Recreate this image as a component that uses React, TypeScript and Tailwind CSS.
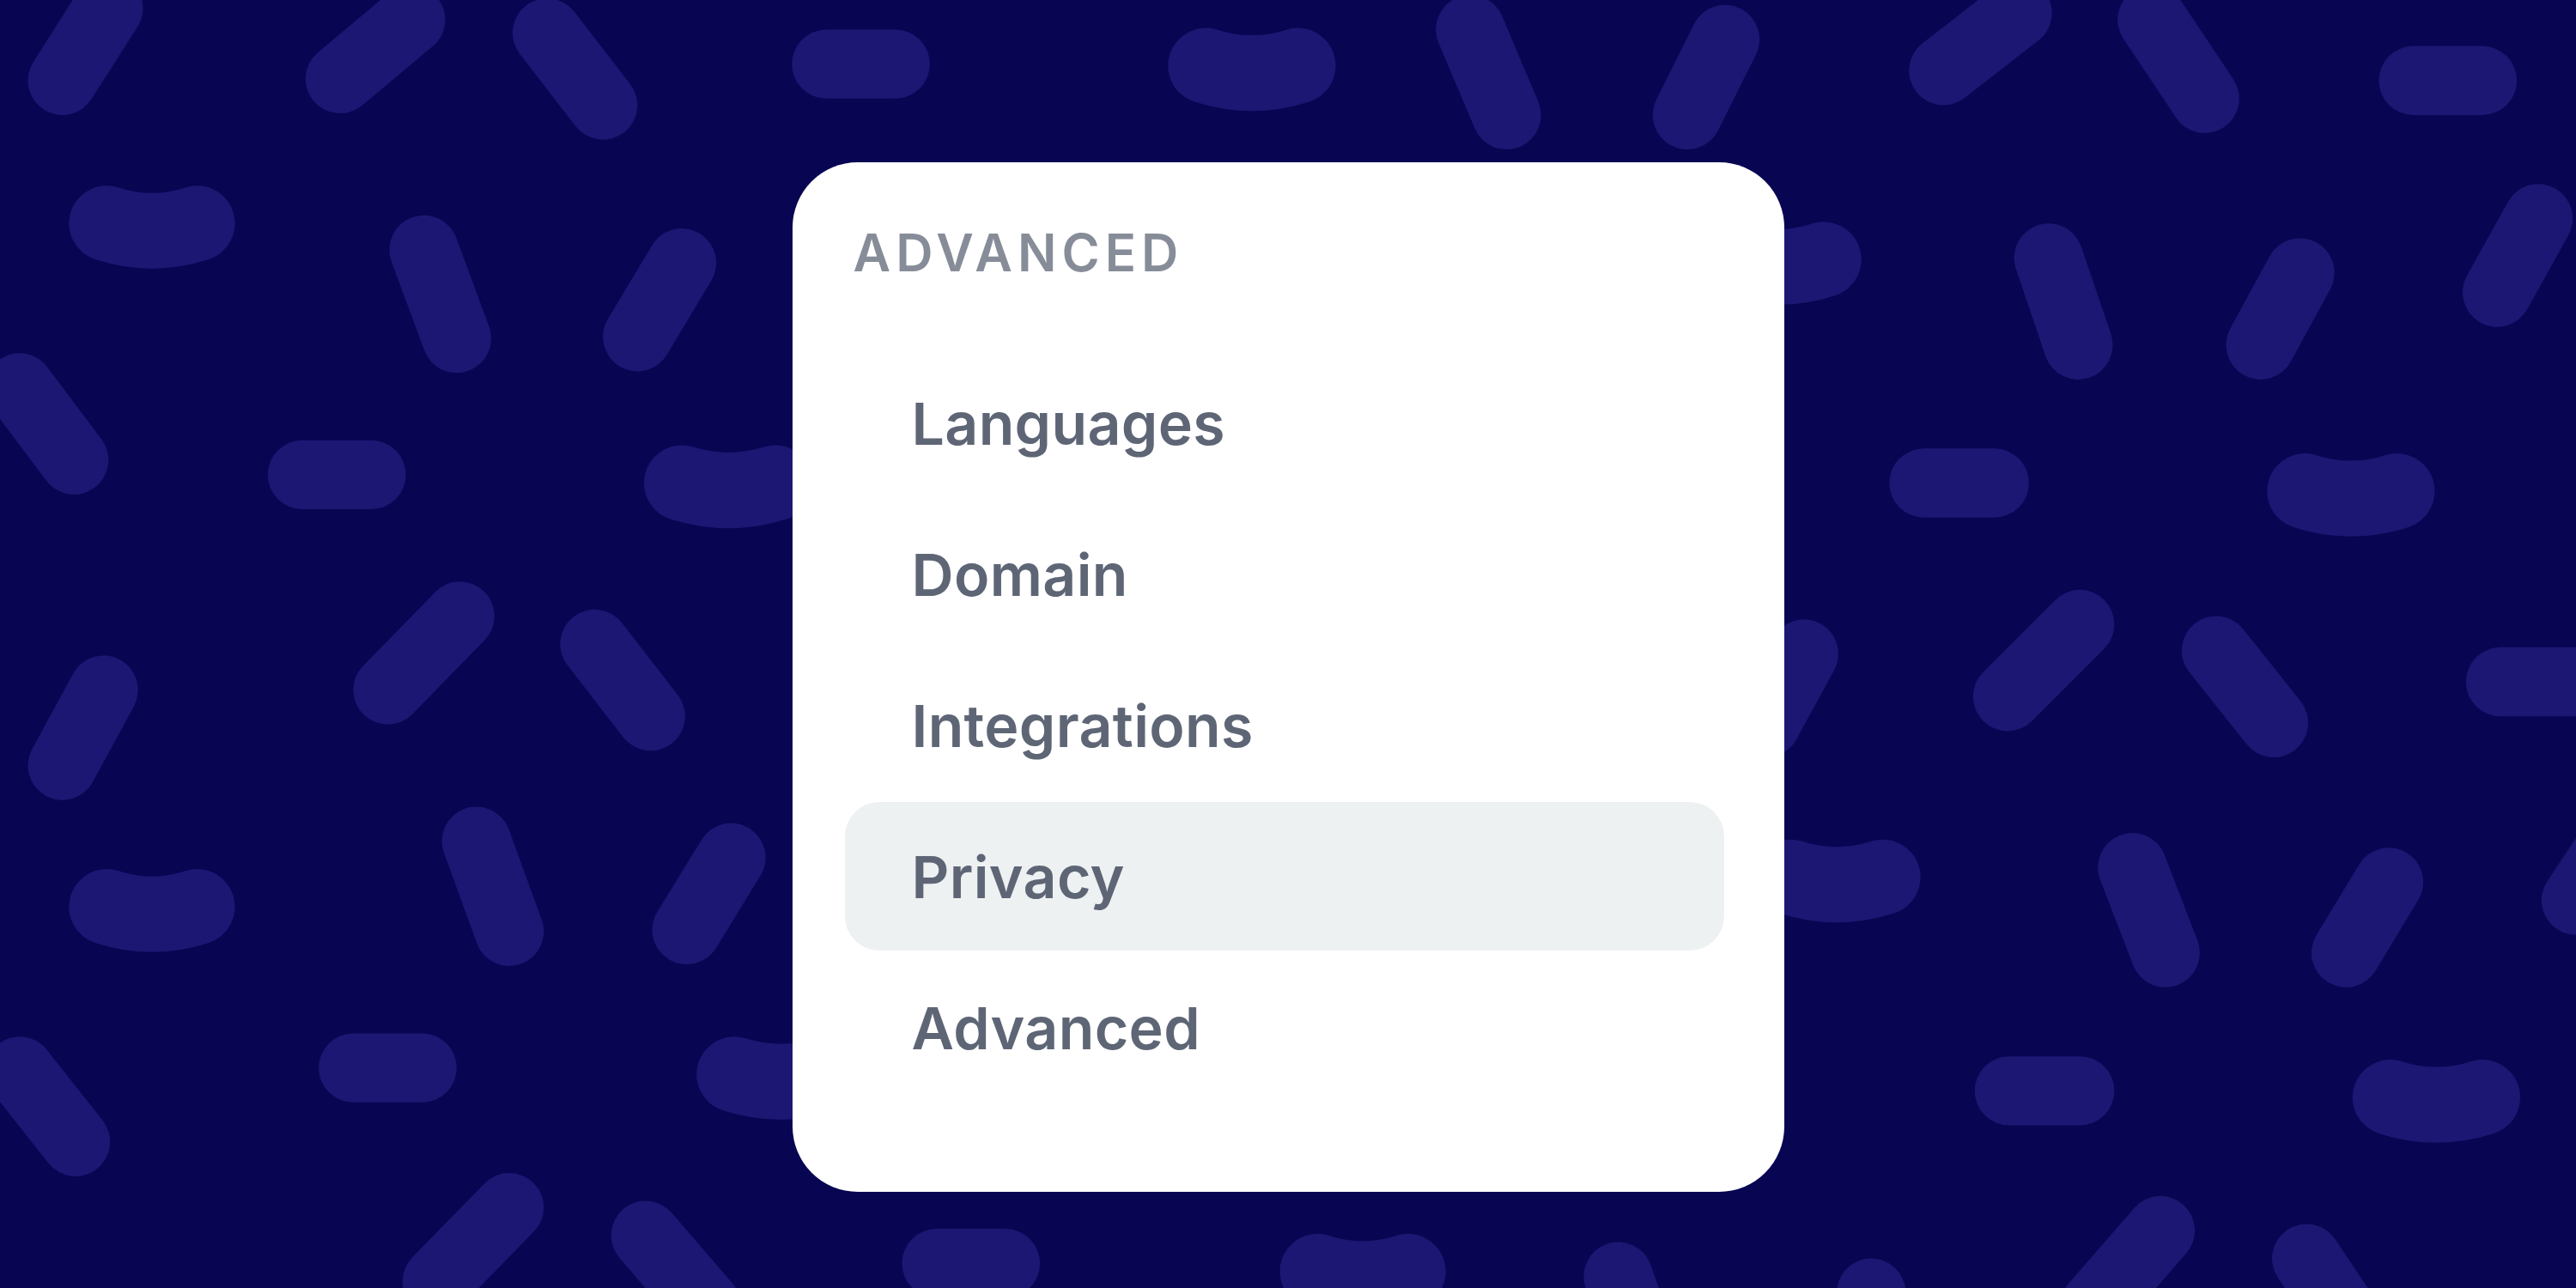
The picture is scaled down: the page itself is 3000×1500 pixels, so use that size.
import React from "react";

type Shape = [number, number, number, number, number?];

// Background pattern shapes, drawn in a 1568x784 coordinate space (scaled to 3000x1500)
const SHAPES: Shape[] = [
  // row 1
  [66, 5, 38, 49],
  [250, 12, 207, 48],
  [333, 20, 367, 64],
  [503, 39, 545, 39],
  [734, 40, 790, 40, 9],
  [895, 18, 917, 70],
  [1050, 24, 1027, 70],
  [1228, 8, 1183, 43],
  [1310, 12, 1342, 60],
  [1469, 49, 1511, 49],
  // row 2
  [65, 136, 120, 136, 9],
  [258, 152, 278, 206],
  [415, 160, 388, 205],
  [1056, 158, 1110, 158, 9],
  [1247, 157, 1265, 210],
  [1400, 166, 1376, 210],
  [1545, 133, 1520, 178],
  // row 3
  [12, 236, 45, 280],
  [184, 289, 226, 289],
  [415, 294, 472, 294, 9],
  [1171, 294, 1214, 294],
  [1403, 299, 1459, 299, 9],
  // row 4
  [280, 375, 236, 420],
  [362, 392, 396, 436],
  [63, 420, 38, 466],
  [1098, 398, 1075, 440],
  [1266, 380, 1222, 424],
  [1349, 396, 1384, 440],
  [1522, 415, 1575, 415],
  // row 5
  [65, 552, 120, 552, 9],
  [290, 512, 310, 567],
  [445, 522, 418, 566],
  [1090, 534, 1146, 534, 9],
  [1298, 528, 1318, 580],
  [1454, 537, 1428, 580],
  [1590, 515, 1568, 548],
  // row 6
  [12, 652, 46, 695],
  [215, 650, 257, 650],
  [447, 654, 504, 654, 9],
  [1223, 664, 1266, 664],
  [1455, 668, 1511, 668, 9],
  // row 7
  [310, 735, 266, 780],
  [393, 752, 430, 795],
  [570, 769, 612, 769],
  [802, 774, 857, 774, 9],
  [985, 777, 1000, 820],
  [1139, 787, 1150, 830],
  [1315, 749, 1275, 795],
  [1404, 766, 1432, 808],
];

function Pattern() {
  return (
    <svg
      className="absolute inset-0"
      width={3000}
      height={1500}
      viewBox="0 0 1568 784"
      preserveAspectRatio="none"
    >
      {SHAPES.map(([x1, y1, x2, y2, c], i) => {
        const mx = (x1 + x2) / 2;
        const my = (y1 + y2) / 2 + (c ?? 0);
        const d = c
          ? `M${x1} ${y1} Q${mx} ${my} ${x2} ${y2}`
          : `M${x1} ${y1} L${x2} ${y2}`;
        return (
          <path
            key={i}
            d={d}
            stroke="#1c1773"
            strokeWidth={c ? 46 : 42}
            strokeLinecap="round"
            fill="none"
          />
        );
      })}
    </svg>
  );
}

const ITEMS = ["Languages", "Domain", "Integrations", "Privacy", "Advanced"];

export default function App() {
  return (
    <div className="relative w-[3000px] h-[1500px] overflow-hidden bg-[#080652] font-['Inter',sans-serif]">
      <Pattern />
      <div className="relative flex justify-center pt-[189px]">
        <div className="w-[1155px] h-[1199px] rounded-[76px] bg-white pt-[75px] pl-[61px]">
          <div className="pl-[10px] text-[60px] leading-[60px] font-semibold tracking-[0.1em] text-[#878d98]">
            ADVANCED
          </div>
          <div className="mt-[82px] flex w-[1024px] flex-col gap-[3px]">
            {ITEMS.map((item) => (
              <div
                key={item}
                className={
                  item === "Privacy"
                    ? "flex h-[173px] items-center rounded-[40px] bg-[#eef1f2] pl-[78px] text-[68px] leading-[68px] font-semibold tracking-[0.005em] text-[#5e6676]"
                    : "flex h-[173px] items-center rounded-[40px] pl-[78px] text-[68px] leading-[68px] font-semibold tracking-[0.005em] text-[#5e6676]"
                }
              >
                {item}
              </div>
            ))}
          </div>
        </div>
      </div>
    </div>
  );
}
